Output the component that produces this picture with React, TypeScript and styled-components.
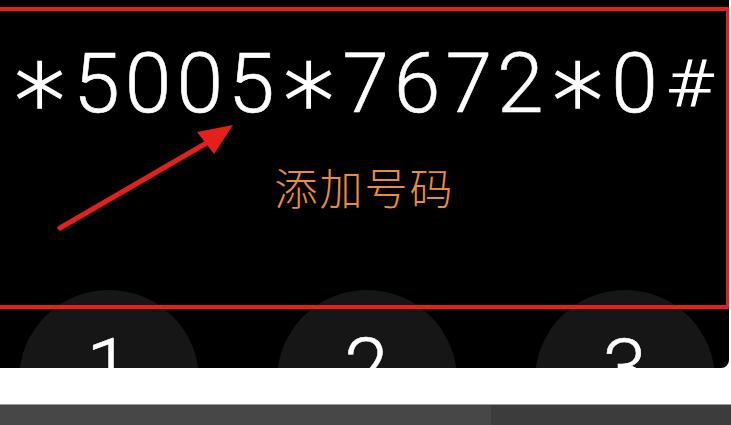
import styled, { createGlobalStyle } from 'styled-components'

const Global = createGlobalStyle`
    html, body {
        margin: 0;
        padding: 0;
        background: #fff;
        overflow: hidden;
    }
`
const Page = styled.div`
    width: 731px;
    height: 425px;
    display: flex;
    flex-direction: column;
    background: #fff;
`
const Screen = styled.div`
    position: relative;
    width: 729px;
    height: 368px;
    background: #000;
    border-bottom-right-radius: 8px;
    overflow: hidden;
    display: flex;
    flex-direction: column;
    align-items: center;
`
const Highlight = styled.div`
    position: absolute;
    left: -4px;
    top: 7px;
    width: 726px;
    height: 294px;
    border: 4px solid #e3201b;
    pointer-events: none;
    z-index: 2;
`
const Number = styled.div`
    margin-top: 34px;
    display: flex;
    align-items: center;
    font-family: Roboto, 'Liberation Sans', sans-serif;
    font-weight: 300;
    font-size: 84px;
    line-height: 100px;
    color: #fff;
    letter-spacing: 5px;
    -webkit-text-stroke: 0.6px #fff;
`
const Star = styled.span`
    font-family: 'DejaVu Sans', sans-serif;
    font-weight: 200;
    font-size: 100px;
    letter-spacing: 0;
    margin: 0 2px 0 -2px;
    transform: translateY(-2px);
    -webkit-text-stroke: 2.4px #fff;
`
const Hash = styled.span`
    font-family: 'DejaVu Sans', sans-serif;
    font-weight: 200;
    font-size: 64px;
    letter-spacing: 0;
    margin-left: 2px;
    -webkit-text-stroke: 1.2px #fff;
`
const AddLabel = styled.div`
    margin-top: 26px;
    font-family: 'Noto Sans CJK SC', sans-serif;
    font-weight: 300;
    font-size: 43px;
    line-height: 52px;
    color: #ee8a3c;
    letter-spacing: 2px;
`
const Arrow = styled.svg`
    position: absolute;
    left: 0;
    top: 0;
    z-index: 3;
`
const Keypad = styled.div`
    position: absolute;
    left: 0;
    top: 290px;
    width: 729px;
    display: grid;
    grid-template-columns: repeat(3, 180px);
    justify-content: center;
    column-gap: 78px;
    padding-left: 2px;
`
const Key = styled.div`
    width: 180px;
    height: 180px;
    border-radius: 50%;
    background: #161616;
    display: flex;
    justify-content: center;
    padding-top: 38px;
    box-sizing: border-box;
    font-family: Roboto, 'Liberation Sans', sans-serif;
    font-weight: 300;
    font-size: 80px;
    line-height: 80px;
    color: #fff;
    -webkit-text-stroke: 0.6px #fff;
`
const Gap = styled.div`
    height: 36px;
    background: #fff;
`
const BottomBar = styled.div`
    flex: 1;
    display: flex;
    border-top: 1px solid #9a9a9a;
    background: #474747;
`
const BarSide = styled.div`
    margin-left: auto;
    width: 240px;
    background: #3c3c3c;
`

const digits = ['1', '2', '3']

export default function App() {
    return (
        <Page>
            <Global />
            <Screen>
                <Number>
                    <Star>∗</Star>5005<Star>∗</Star>7672<Star>∗</Star>0<Hash>#</Hash>
                </Number>
                <AddLabel>添加号码</AddLabel>
                <Keypad>
                    {digits.map(d => <Key key={d}>{d}</Key>)}
                </Keypad>
                <Highlight />
                <Arrow width="731" height="368" viewBox="0 0 731 368">
                    <line x1="60" y1="228" x2="210" y2="141" stroke="#e3201b" strokeWidth="5" strokeLinecap="round" />
                    <polygon points="233,125 197,132 214,154" fill="#e3201b" />
                </Arrow>
            </Screen>
            <Gap />
            <BottomBar>
                <BarSide />
            </BottomBar>
        </Page>
    )
}
